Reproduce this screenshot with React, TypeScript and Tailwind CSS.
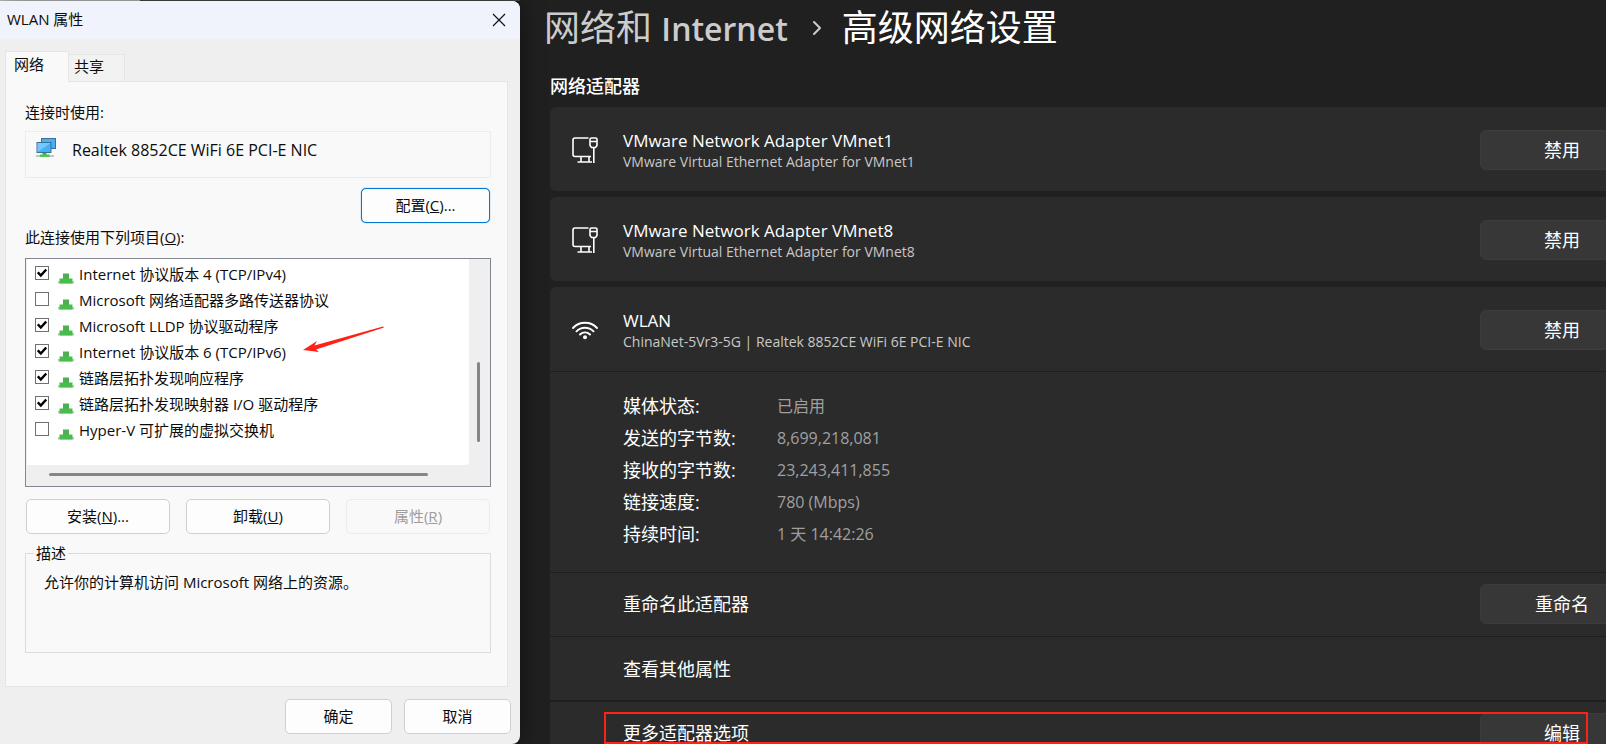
import { useState } from "react";
import type { ReactNode } from "react";
import { ChevronRight } from "lucide-react";

const protocols = [
  { name: "Internet 协议版本 4 (TCP/IPv4)", enabled: true },
  { name: "Microsoft 网络适配器多路传送器协议", enabled: false },
  { name: "Microsoft LLDP 协议驱动程序", enabled: true },
  { name: "Internet 协议版本 6 (TCP/IPv6)", enabled: true },
  { name: "链路层拓扑发现响应程序", enabled: true },
  { name: "链路层拓扑发现映射器 I/O 驱动程序", enabled: true },
  { name: "Hyper-V 可扩展的虚拟交换机", enabled: false },
];

const details = [
  { label: "媒体状态:", value: "已启用" },
  { label: "发送的字节数:", value: "8,699,218,081" },
  { label: "接收的字节数:", value: "23,243,411,855" },
  { label: "链接速度:", value: "780 (Mbps)" },
  { label: "持续时间:", value: "1 天 14:42:26" },
];

function MonitorsIcon() {
  return (
    <svg width="20" height="20" viewBox="0 0 20 20" aria-hidden="true">
      <rect x="5.5" y="0.5" width="14" height="10" fill="#4aaef0" stroke="#3d6f96" />
      <rect x="1" y="4.500" width="14" height="10" fill="#45b0f5" stroke="#3d6f96" />
      <path d="M1.500 14L14.500 5H1.500z" fill="#74c8fb" />
      <rect x="6.500" y="15" width="4" height="2.500" fill="#3fae49" />
      <rect x="0" y="17" width="18" height="2" fill="#c3c6c3" />
      <rect x="4" y="16.500" width="9.500" height="2.500" fill="#4cc552" />
    </svg>
  );
}

function ProtocolIcon() {
  return (
    <svg width="16" height="11" viewBox="0 0 16 11" aria-hidden="true">
      <rect x="0" y="8" width="16" height="2.500" fill="#b5cdb5" />
      <rect x="5" y="0.500" width="6" height="6" fill="#4fae55" />
      <rect x="1.500" y="5.500" width="13" height="5" fill="#48bd4e" />
    </svg>
  );
}

function EthernetIcon() {
  return (
    <svg width="26" height="26" viewBox="0 0 26 26" fill="none" stroke="#fff" strokeWidth="1.600" aria-hidden="true">
      <path d="M16.500 1H3a2 2 0 0 0-2 2v14.500a2 2 0 0 0 2 2h16M9 20v5M17 20v5M5.500 25H20" />
      <path d="M19.500 1h4a1.500 1.500 0 0 1 1.500 1.500V8.500L23.500 10.500h-4L18 8.500V2.500A1.500 1.500 0 0 1 19.500 1zM18 4.500h7M21.800 10.500V26" />
    </svg>
  );
}

function WifiIcon() {
  return (
    <svg width="26" height="20" viewBox="0 0 26 20" fill="none" stroke="#fff" strokeWidth="1.900" strokeLinecap="round" aria-hidden="true">
      <path d="M1 8a16.500 16.500 0 0 1 24 0M4.500 11.300a12 12 0 0 1 17 0M8 14.500a7 7 0 0 1 10 0" />
      <circle cx="13" cy="17.200" r="2" fill="#fff" stroke="none" />
    </svg>
  );
}

function DialogButton({
  children,
  className = "",
  primary = false,
  disabled = false,
}: {
  children: ReactNode;
  className?: string;
  primary?: boolean;
  disabled?: boolean;
}) {
  return (
    <button
      type="button"
      disabled={disabled}
      className={`h-[35px] rounded-[5px] border bg-[#fdfdfd] pb-0.5 text-center disabled:border-[#ececec] disabled:bg-[#f9f9f9] disabled:text-[#9d9d9d] ${
        primary ? "border-[#0078d4] shadow-[0_0_1px_#0078d4]" : "border-[#d0d0d0]"
      } ${className}`}
    >
      {children}
    </button>
  );
}

function PropertiesDialog() {
  const [items, setItems] = useState(protocols);

  const toggle = (index: number) => {
    setItems(items.map((item, i) => (i === index ? { ...item, enabled: !item.enabled } : item)));
  };

  return (
    <section className="relative z-10 flex w-[520px] shrink-0 flex-col bg-[#1c1c1c] text-[15px] leading-5 text-[#0c0c0c]">
      <div className="h-px bg-gradient-to-r from-[#c4c4c4] from-27% to-[#4a4a4a] to-27%"></div>
      <div className="flex flex-1 flex-col overflow-hidden rounded-r-lg bg-[#efefef] shadow-[0_0_24px_rgba(0,0,0,0.5)]">
        {/* Title bar */}
        <header className="flex h-[38px] shrink-0 items-center justify-between bg-[#f0f3fb] pr-3.5 pl-[7px]">
          <h1 className="pb-0.5">WLAN 属性</h1>
          <button type="button" aria-label="关闭">
            <svg width="14" height="14" viewBox="0 0 14 14" stroke="#111" strokeWidth="1.2" aria-hidden="true">
              <path d="M1 1l12 12M13 1L1 13" />
            </svg>
          </button>
        </header>

        {/* Tabs */}
        <div className="mt-3 flex items-end pl-[5px]" role="tablist">
          <button type="button" role="tab" aria-selected="true" className="z-10 -mb-px h-[31px] w-16 border border-b-0 border-[#e5e5e5] bg-[#f9f9f9] pb-1.5 pl-2 text-left">
            网络
          </button>
          <button type="button" role="tab" aria-selected="false" className="h-[27px] w-14 border border-b-0 border-l-0 border-[#e5e5e5] bg-[#f2f2f2] pb-1 pl-[5px] text-left">
            共享
          </button>
        </div>

        <div className="mr-3 ml-[5px] flex h-[606px] flex-col border border-[#e5e5e5] bg-[#f9f9f9] pr-4 pl-[19px]">
          <p className="mt-5">连接时使用:</p>
          <div className="mt-[9px] flex h-[47px] items-start gap-4 border border-[#ececec] pt-1.5 pl-2.5">
            <MonitorsIcon />
            <span className="text-base leading-6">Realtek 8852CE WiFi 6E PCI-E NIC</span>
          </div>
          <DialogButton className="mt-2.5 mr-px w-[129px] self-end" primary>
            配置(<u>C</u>)...
          </DialogButton>

          <p className="mt-1">
            此连接使用下列项目(<u>O</u>):
          </p>
          <div className="relative mt-[11px] h-[229px] border border-[#828790] bg-[#efefef]">
            <ul className="mr-[21px] ml-px h-[206px] rounded-br bg-white pt-0.5 pl-2">
              {items.map((item, index) => (
                <li key={item.name}>
                  <label className="flex h-[26px] items-center">
                    <input
                      type="checkbox"
                      checked={item.enabled}
                      onChange={() => toggle(index)}
                      className="peer sr-only"
                    />
                    <span className="mb-0.5 flex size-3.5 items-center justify-center border border-[#707070] bg-white text-transparent peer-checked:text-black">
                      <svg width="10" height="10" viewBox="0 0 10 10" fill="none" stroke="currentColor" strokeWidth="2.4" aria-hidden="true">
                        <path d="M0.800 4.300L3.800 7.500L9.200 1.500" />
                      </svg>
                    </span>
                    <span className="mt-2 mr-[5px] ml-[9px]">
                      <ProtocolIcon />
                    </span>
                    {item.name}
                  </label>
                </li>
              ))}
            </ul>
            {/* Scrollbars */}
            <div className="absolute top-[103px] right-2.5 h-20 w-[3px] rounded-full bg-[#868686]"></div>
            <div className="absolute right-[62px] bottom-2.5 left-[23px] h-[3px] rounded-full bg-[#868686]"></div>
            {/* Arrow to the IPv6 entry */}
            <svg className="absolute top-[66px] left-[276px]" width="84" height="30" viewBox="0 0 84 30" aria-hidden="true">
              <path d="M1 25L15 16L12.500 20.500L81 1.500L82 2.500L14 24.500L17 27z" fill="#ff2116" />
            </svg>
          </div>

          <div className="mt-3 flex gap-4 px-px">
            <DialogButton className="flex-1">
              安装(<u>N</u>)...
            </DialogButton>
            <DialogButton className="flex-1">
              卸载(<u>U</u>)
            </DialogButton>
            <DialogButton className="flex-1" disabled>
              属性(<u>R</u>)
            </DialogButton>
          </div>

          <fieldset className="mt-[9px] h-[110px] border border-[#dcdcdc] px-[18px]">
            <legend className="-ml-2.5 px-0.5">描述</legend>
            <p className="mt-[9px]">允许你的计算机访问 Microsoft 网络上的资源。</p>
          </fieldset>
        </div>

        <footer className="mt-3 flex justify-end gap-3 pr-[9px]">
          <DialogButton className="w-[107px]">确定</DialogButton>
          <DialogButton className="w-[107px]">取消</DialogButton>
        </footer>
      </div>
    </section>
  );
}

function SettingsButton({ children }: { children: ReactNode }) {
  return (
    <button type="button" className="h-10 w-[164px] rounded-md border border-[#3c3c3c] bg-[#373737] text-lg">
      {children}
    </button>
  );
}

function AdapterRow({ icon, name, description }: { icon: ReactNode; name: string; description: string }) {
  return (
    <div className="flex h-[84px] items-center pt-0.5 pr-[26px] pl-[22px]">
      <div className="w-[51px]">{icon}</div>
      <div className="flex-1">
        <h3 className="text-[17px] leading-6">{name}</h3>
        <p className="text-sm leading-[18px] text-[#c8c8c8]">{description}</p>
      </div>
      <SettingsButton>禁用</SettingsButton>
    </div>
  );
}

function NetworkSettings() {
  return (
    <main className="min-w-0 flex-1 overflow-hidden pl-[30px] text-white">
      <div className="-mr-16">
        <nav className="-ml-1.5 flex h-14 items-center text-4xl">
          <a href="#network" className="text-[#cccccc]">
            网络和 <span className="text-[32px] font-semibold">Internet</span>
          </a>
          <ChevronRight className="mr-[13px] ml-[17px] size-6 text-[#cccccc]" />
          <h1>高级网络设置</h1>
        </nav>

        <h2 className="mt-4 text-lg leading-7 font-medium">网络适配器</h2>

        <div className="mt-[7px] flex flex-col gap-1.5">
          <div className="rounded-md bg-[#2b2b2b]">
            <AdapterRow icon={<EthernetIcon />} name="VMware Network Adapter VMnet1" description="VMware Virtual Ethernet Adapter for VMnet1" />
          </div>
          <div className="rounded-md bg-[#2b2b2b]">
            <AdapterRow icon={<EthernetIcon />} name="VMware Network Adapter VMnet8" description="VMware Virtual Ethernet Adapter for VMnet8" />
          </div>
          <div className="rounded-md bg-[#2b2b2b]">
            <AdapterRow icon={<WifiIcon />} name="WLAN" description="ChinaNet-5Vr3-5G | Realtek 8852CE WiFi 6E PCI-E NIC" />

            <dl className="h-[201px] border-t border-[#1e1e1e] pt-[18px] pl-[73px]">
              {details.map((row) => (
                <div key={row.label} className="flex h-8 items-center">
                  <dt className="w-[154px] text-lg">{row.label}</dt>
                  <dd className="text-base text-[#a0a0a0]">{row.value}</dd>
                </div>
              ))}
            </dl>

            <div className="flex h-16 items-center justify-between border-t border-[#1e1e1e] pr-[26px] pb-px pl-[73px] text-lg">
              <span>重命名此适配器</span>
              <SettingsButton>重命名</SettingsButton>
            </div>
            <a href="#properties" className="flex h-16 items-center border-t border-[#1e1e1e] pl-[73px] text-lg">
              查看其他属性
            </a>
            <div className="relative flex h-16 items-center justify-between border-t-2 border-[#1e1e1e] pr-[26px] pl-[73px] text-lg">
              <span>更多适配器选项</span>
              <SettingsButton>编辑</SettingsButton>
              {/* Highlight around the adapter options */}
              <div className="pointer-events-none absolute top-2.5 right-[82px] left-[54px] h-8 border-2 border-[#ff2116]"></div>
            </div>
          </div>
        </div>
      </div>
    </main>
  );
}

export default function App() {
  return (
    <div className="flex h-screen overflow-hidden bg-[#202020] font-['Open_Sans','Noto_Sans_CJK_SC',sans-serif]">
      <PropertiesDialog />
      <NetworkSettings />
    </div>
  );
}
